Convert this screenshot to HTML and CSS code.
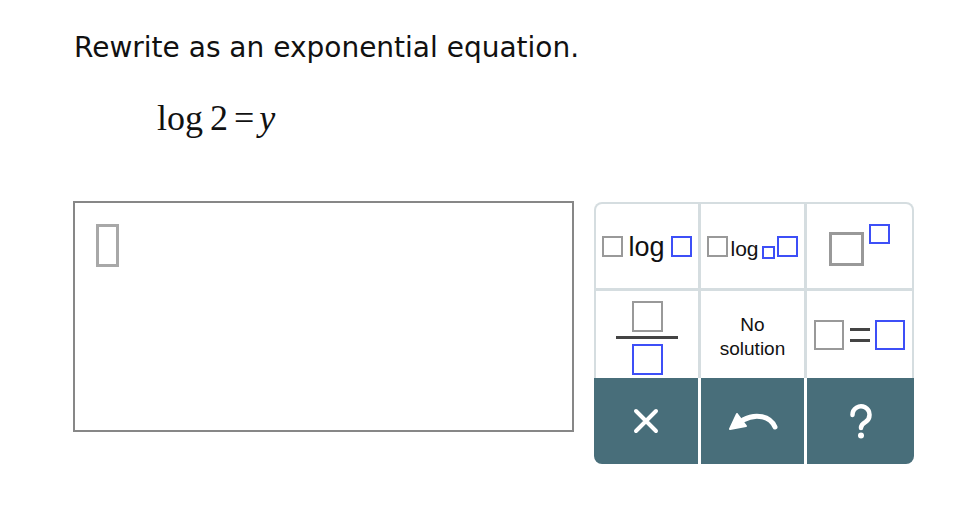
FILE: index.html
```html
<!DOCTYPE html>
<html>
<head>
<meta charset="utf-8">
<link rel="stylesheet" href="styles.css">
</head>
<body>
<div class="page">
  <div class="prompt">Rewrite as an exponential equation.</div>
  <div class="math">log<span class="sp"></span>2<span class="eq">=</span><i>y</i></div>
  <div class="work">
    <div class="answer"><span class="caret"></span></div>
    <div class="keypad">
      <div class="keys">
        <div class="key k-tl">
          <span class="sq g s20"></span><span class="log">log</span><span class="sq b s20"></span>
        </div>
        <div class="key">
          <span class="sq g s20"></span><span class="log small">log</span><span class="sq b s13 sub"></span><span class="sq b s20"></span>
        </div>
        <div class="key k-tr top">
          <span class="sq g big"></span><span class="sq b sup"></span>
        </div>
        <div class="key frac">
          <span class="sq g s31"></span><span class="bar"></span><span class="sq b s31"></span>
        </div>
        <div class="key text">No<br>solution</div>
        <div class="key">
          <span class="sq g s30"></span><span class="equals"><span></span><span></span></span><span class="sq b s30"></span>
        </div>
      </div>
      <div class="actions">
        <div class="act">
          <svg width="28" height="28" viewBox="0 0 28 28"><path d="M4 4 L24 24 M24 4 L4 24" stroke="#fff" stroke-width="4" stroke-linecap="round" fill="none"/></svg>
        </div>
        <div class="act">
          <svg width="50" height="22" viewBox="0 0 50 22"><path d="M47 17 C42 6 28 3 15 10" stroke="#fff" stroke-width="5" stroke-linecap="round" fill="none"/><path d="M2 19 L9 4 L18 16 Z" fill="#fff" stroke="#fff" stroke-width="2" stroke-linejoin="round"/></svg>
        </div>
        <div class="act">
          <svg width="28" height="36" viewBox="0 0 28 36"><path d="M5.5 12 A8.5 8.5 0 1 1 18.5 19 Q14 21.5 14 25" stroke="#fff" stroke-width="4.5" stroke-linecap="round" fill="none"/><circle cx="14" cy="32.5" r="3" fill="#fff"/></svg>
        </div>
      </div>
    </div>
  </div>
</div>
</body>
</html>
```
FILE: styles.css
```css
* { box-sizing: border-box; }
html, body { margin: 0; padding: 0; background: #fff; }
.page { width: 960px; height: 526px; overflow: hidden; }
.prompt {
  font-family: "DejaVu Sans", Verdana, sans-serif;
  font-size: 28px;
  line-height: 34px;
  color: #111;
  margin: 31px 0 0 74px;
}
.math {
  font-family: "Liberation Serif", "Times New Roman", serif;
  font-size: 36px;
  line-height: 40px;
  color: #111;
  margin: 33px 0 0 157px;
}
.math .sp { display: inline-block; width: 7px; }
.math .eq { margin: 0 5px 0 6px; }
.math i { font-style: italic; }
.work {
  display: flex;
  align-items: flex-start;
  margin: 63px 0 0 73px;
  gap: 20px;
}
.answer {
  width: 501px;
  height: 231px;
  border: 2px solid #878787;
  padding: 21px 0 0 21px;
}
.caret {
  display: block;
  width: 23px;
  height: 43px;
  border: 3px solid #a8a8a8;
}
.keypad {
  width: 320px;
  height: 262px;
  margin-top: 1px;
  border-radius: 8px;
  overflow: hidden;
  display: flex;
  flex-direction: column;
}
.keys {
  background: #d5dde0;
  padding: 2px 2px 0 2px;
  display: grid;
  grid-template-columns: 102px 103px 105px;
  grid-template-rows: 84px 87px;
  gap: 3px;
}
.key {
  background: #fff;
  display: flex;
  align-items: center;
  justify-content: center;
  font-family: "Liberation Sans", Arial, sans-serif;
  color: #111;
}
.k-tl { border-top-left-radius: 6px; }
.k-tr { border-top-right-radius: 6px; }
.sq { display: inline-block; flex: none; }
.sq.g { border: 2px solid #999; }
.sq.b { border: 2px solid #3d4ff7; }
.s20 { width: 21px; height: 21px; }
.s13 { width: 13px; height: 13px; }
.s30 { width: 30px; height: 30px; }
.s31 { width: 31px; height: 31px; }
.log { font-size: 27px; line-height: 30px; margin: 0 6px 0 5px; position: relative; top: 1px; }
.log.small { font-size: 21px; margin: 0 3px 0 2px; top: 3px; }
.sub { margin: 12px 2px 0 0; }
.top { align-items: flex-start; padding-top: 20px; }
.big { width: 35px; height: 34px; border-width: 3px !important; margin: 8px 5px 0 0; }
.sup { width: 21px; height: 20px; }
.frac { flex-direction: column; justify-content: flex-start; padding-top: 10px; }
.bar { display: block; width: 62px; height: 3px; background: #444; margin: 4px 0 5px; }
.text { font-size: 19px; line-height: 24px; text-align: center; padding-top: 5px; }
.equals { display: flex; flex-direction: column; gap: 8px; margin: 0 5px 0 6px; }
.equals span { display: block; width: 20px; height: 3px; background: #444; }
.actions {
  display: flex;
  gap: 3px;
  background: #fff;
  height: 86px;
}
.act {
  background: #486e7a;
  display: flex;
  align-items: center;
  justify-content: center;
}
.act:nth-child(1) { width: 104px; }
.act:nth-child(2) { width: 103px; }
.act:nth-child(3) { width: 107px; }
```
